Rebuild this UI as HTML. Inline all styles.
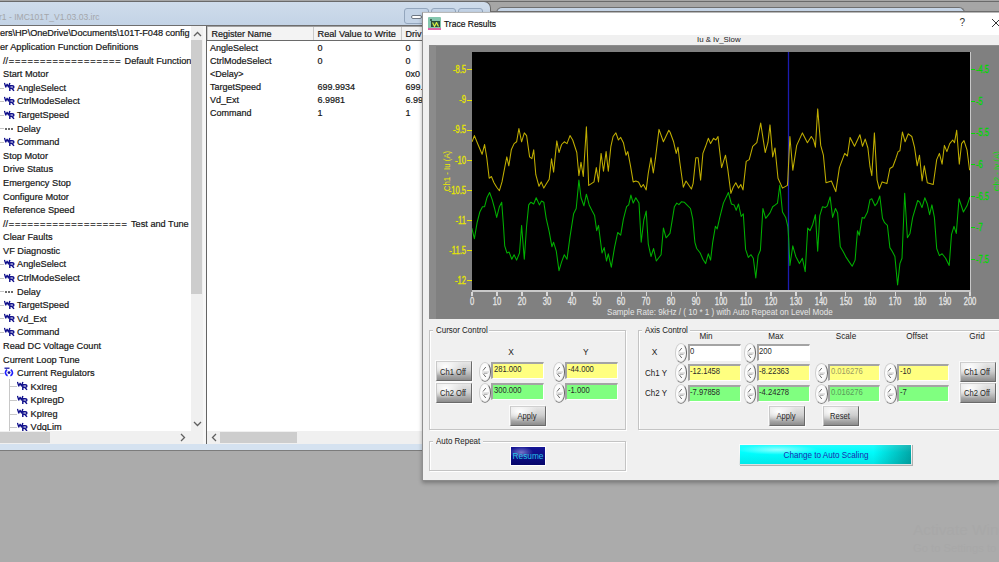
<!DOCTYPE html><html><head><meta charset="utf-8"><style>
*{margin:0;padding:0;box-sizing:border-box}
html,body{width:999px;height:562px;overflow:hidden;background:#ababab;font-family:"Liberation Sans",sans-serif}
.a{position:absolute}
.t{position:absolute;white-space:nowrap;line-height:12px;height:12px}
.tr{font-size:9.2px;color:#111;-webkit-text-stroke:0.2px #222}
.wr{position:absolute;width:11px;height:9px}
.wr b{position:absolute;font-weight:bold;color:#16169a;font-size:7px;line-height:7px;font-family:"Liberation Sans",sans-serif}
.dl{font-size:9px;color:#d6d6d6}
.dg{font-size:8.3px;color:#1a1a1a}
.fld{position:absolute;height:17px;border-top:2px solid #9c9c9c;border-left:2px solid #9c9c9c;border-bottom:1px solid #fff;border-right:1px solid #fff;font-size:8.6px;color:#2a2a2a;padding-left:0px;line-height:11px;white-space:nowrap;overflow:hidden}
.spin{position:absolute;width:12px;height:19px;border-radius:6px/9px;background:radial-gradient(ellipse at 40% 45%,#ffffff 0%,#f2f2f2 50%,#c4c4c4 100%);border:1px solid #c8c8c8}
.btn{position:absolute;height:20px;background:linear-gradient(#f4f4f4,#d2d2d2 45%,#8a8a8a);border:1px solid #7a7a7a;border-top-color:#e0e0e0;border-left-color:#d8d8d8;font-size:8.5px;color:#1a1a1a;text-align:center;line-height:19px;white-space:nowrap}
.grp{position:absolute;border:1px solid #c4c4c4;box-shadow:inset 1px 1px 0 #fff,1px 1px 0 #fff}
.gl{position:absolute;background:#f0f0f0;padding:0 2px;font-size:8.3px;color:#1a1a1a;line-height:10px;white-space:nowrap}
</style></head><body>
<div class="a" style="left:0;top:0;width:999px;height:12px;background:#a6a6a6"></div>
<div class="a" style="left:0;top:1px;width:999px;height:1px;background:#6a6a6a"></div>
<div class="a" style="left:0;top:1px;width:491px;height:25px;background:linear-gradient(#cfdceb,#c3d3e6);border-top:1px solid #6a6a6a;border-right:1px solid #6a6a6a;border-radius:0 7px 0 0"></div>
<div class="a" style="left:496px;top:7px;width:469px;height:10px;background:#c6d5e7;border-top:1px solid #6f6f6f;border-left:1px solid #6f6f6f;border-right:1px solid #6f6f6f;border-radius:6px 6px 0 0"></div>
<div class="t" style="left:-1px;top:10.5px;font-size:9.6px;color:#a4a6aa;transform-origin:0 0;transform:scaleX(0.89)">r1 - IMC101T_V1.03.03.irc</div>
<div class="a" style="left:404px;top:8px;width:25px;height:16px;border:1px solid #93a6bd;border-radius:3px;background:#c4d4e7"></div>
<div class="a" style="left:431px;top:8px;width:25px;height:16px;border:1px solid #93a6bd;border-radius:3px;background:#c4d4e7"></div>
<div class="a" style="left:458px;top:8px;width:25px;height:16px;border:1px solid #93a6bd;border-radius:3px;background:#c4d4e7"></div>
<div class="a" style="left:411px;top:15px;width:11px;height:3.5px;border:1px solid #6d7784;background:#fff;border-radius:2px"></div>
<div class="a" style="left:490px;top:11px;width:509px;height:1px;background:#707070"></div>
<div class="a" style="left:0;top:25px;width:423px;height:1px;background:#6e6e6e"></div>
<div class="a" style="left:0;top:26px;width:191px;height:405px;background:#fff"></div>
<div class="a" style="left:191px;top:26px;width:12px;height:405px;background:#f0f0f0"></div>
<div class="a" style="left:191px;top:40px;width:11px;height:254px;background:#cdcdcd"></div>
<svg class="a" style="left:192.5px;top:421px" width="9" height="6"><polyline points="1,1 4.5,4.5 8,1" fill="none" stroke="#606060" stroke-width="1.3"/></svg>
<svg class="a" style="left:193px;top:31px" width="9" height="6"><polyline points="1,5 4.5,1.5 8,5" fill="none" stroke="#606060" stroke-width="1.3"/></svg>
<div class="a" style="left:0;top:431px;width:204px;height:13px;background:#f0f0f0"></div>
<div class="a" style="left:0;top:432px;width:50px;height:11px;background:#cdcdcd"></div>
<svg class="a" style="left:180px;top:433px" width="6" height="9"><polyline points="1,1 4.5,4.5 1,8" fill="none" stroke="#606060" stroke-width="1.3"/></svg>
<div class="a" style="left:203px;top:26px;width:3px;height:418px;background:#f7f7f7"></div>
<div class="a" style="left:206px;top:26px;width:1px;height:418px;background:#646464"></div>
<div class="a" style="left:207px;top:26px;width:216px;height:405px;background:#fff"></div>
<div class="a" style="left:207px;top:26px;width:216px;height:15px;background:#f3f3f3;border-top:1px solid #a0a0a0;border-bottom:1px solid #6a6a6a"></div>
<div class="a" style="left:313px;top:27px;width:1px;height:13px;background:#c9c9c9"></div>
<div class="a" style="left:401px;top:27px;width:1px;height:13px;background:#c9c9c9"></div>
<div class="a" style="left:207px;top:27px;width:1px;height:13px;background:#c9c9c9"></div>
<div class="a" style="left:207px;top:431px;width:216px;height:13px;background:#f0f0f0"></div>
<div class="a" style="left:220px;top:432px;width:77px;height:11px;background:#cdcdcd"></div>
<svg class="a" style="left:211px;top:433px" width="6" height="9"><polyline points="5,1 1.5,4.5 5,8" fill="none" stroke="#606060" stroke-width="1.3"/></svg>
<div class="a" style="left:0;top:444px;width:423px;height:7px;background:#d5e2f0;border-bottom:1px solid #7c7c7c"></div>
<div class="t tr" style="left:211.5px;top:28.0px;font-size:9.0px">Register Name</div>
<div class="t tr" style="left:317.5px;top:28.0px;font-size:9.2px">Real Value to Write</div>
<div class="t tr" style="left:405.5px;top:28.0px;font-size:9.0px">Driv</div>
<div class="t tr" style="left:210px;top:41.5px;font-size:9.0px">AngleSelect</div>
<div class="t tr" style="left:317.5px;top:41.5px;font-size:9.0px">0</div>
<div class="t tr" style="left:405.5px;top:41.5px;font-size:9.0px">0</div>
<div class="t tr" style="left:210px;top:54.5px;font-size:9.0px">CtrlModeSelect</div>
<div class="t tr" style="left:317.5px;top:54.5px;font-size:9.0px">0</div>
<div class="t tr" style="left:405.5px;top:54.5px;font-size:9.0px">0</div>
<div class="t tr" style="left:210px;top:67.5px;font-size:9.0px">&lt;Delay&gt;</div>
<div class="t tr" style="left:317.5px;top:67.5px;font-size:9.0px"></div>
<div class="t tr" style="left:405.5px;top:67.5px;font-size:9.0px">0x0</div>
<div class="t tr" style="left:210px;top:80.5px;font-size:9.0px">TargetSpeed</div>
<div class="t tr" style="left:317.5px;top:80.5px;font-size:9.0px">699.9934</div>
<div class="t tr" style="left:405.5px;top:80.5px;font-size:9.0px">699.</div>
<div class="t tr" style="left:210px;top:93.5px;font-size:9.0px">Vd_Ext</div>
<div class="t tr" style="left:317.5px;top:93.5px;font-size:9.0px">6.9981</div>
<div class="t tr" style="left:405.5px;top:93.5px;font-size:9.0px">6.99</div>
<div class="t tr" style="left:210px;top:106.5px;font-size:9.0px">Command</div>
<div class="t tr" style="left:317.5px;top:106.5px;font-size:9.0px">1</div>
<div class="t tr" style="left:405.5px;top:106.5px;font-size:9.0px">1</div>
<div class="a" style="left:0;top:26px;width:191px;height:405px;overflow:hidden"><div class="a" style="left:0;top:-26px;width:191px;height:460px">
<div class="a" style="left:9px;top:379px;width:1px;height:52px;background:#c8c8c8"></div>
<div class="t tr" style="left:0px;top:27.4px;"><span style="letter-spacing:-0.07px">ers\HP\OneDrive\Documents\101T-F048 config</span></div>
<div class="t tr" style="left:0px;top:41.0px;">er Application Function Definitions</div>
<div class="t tr" style="left:3px;top:54.6px;">//<span style="letter-spacing:0.9px;margin-left:0.6px">==================</span></div>
<div class="t tr" style="left:124.5px;top:54.6px;">Default Function</div>
<div class="t tr" style="left:3px;top:68.2px;">Start Motor</div>
<div class="a" style="left:0;top:87.5px;width:4px;height:1px;background:#c4c4c4"></div>
<svg class="a" style="left:3.5px;top:82.3px" width="12" height="10"><polyline points="0.4,0.9 1.8,5 3.1,2.3 4.4,5 5.9,0.9" fill="none" stroke="#10108c" stroke-width="1.35" stroke-linejoin="round"/><path d="M5.8,8.9 V3.7 H8.3 Q9.9,3.7 9.9,4.95 Q9.9,6.2 8.3,6.2 H5.8 M7.7,6.2 L10,8.9" fill="none" stroke="#10108c" stroke-width="1.45"/></svg>
<div class="t tr" style="left:17px;top:81.8px;">AngleSelect</div>
<div class="a" style="left:0;top:101.1px;width:4px;height:1px;background:#c4c4c4"></div>
<svg class="a" style="left:3.5px;top:95.9px" width="12" height="10"><polyline points="0.4,0.9 1.8,5 3.1,2.3 4.4,5 5.9,0.9" fill="none" stroke="#10108c" stroke-width="1.35" stroke-linejoin="round"/><path d="M5.8,8.9 V3.7 H8.3 Q9.9,3.7 9.9,4.95 Q9.9,6.2 8.3,6.2 H5.8 M7.7,6.2 L10,8.9" fill="none" stroke="#10108c" stroke-width="1.45"/></svg>
<div class="t tr" style="left:17px;top:95.4px;">CtrlModeSelect</div>
<div class="a" style="left:0;top:114.7px;width:4px;height:1px;background:#c4c4c4"></div>
<svg class="a" style="left:3.5px;top:109.5px" width="12" height="10"><polyline points="0.4,0.9 1.8,5 3.1,2.3 4.4,5 5.9,0.9" fill="none" stroke="#10108c" stroke-width="1.35" stroke-linejoin="round"/><path d="M5.8,8.9 V3.7 H8.3 Q9.9,3.7 9.9,4.95 Q9.9,6.2 8.3,6.2 H5.8 M7.7,6.2 L10,8.9" fill="none" stroke="#10108c" stroke-width="1.45"/></svg>
<div class="t tr" style="left:17px;top:109.0px;">TargetSpeed</div>
<div class="a" style="left:0;top:128.2px;width:4px;height:1px;background:#c4c4c4"></div>
<div class="a" style="left:4.5px;top:127.9px;width:2px;height:2px;border-radius:50%;background:#3a3a3a"></div>
<div class="a" style="left:7.6px;top:127.9px;width:2px;height:2px;border-radius:50%;background:#3a3a3a"></div>
<div class="a" style="left:10.8px;top:127.9px;width:2px;height:2px;border-radius:50%;background:#3a3a3a"></div>
<div class="t tr" style="left:17px;top:122.5px;">Delay</div>
<div class="a" style="left:0;top:141.8px;width:4px;height:1px;background:#c4c4c4"></div>
<svg class="a" style="left:3.5px;top:136.6px" width="12" height="10"><polyline points="0.4,0.9 1.8,5 3.1,2.3 4.4,5 5.9,0.9" fill="none" stroke="#10108c" stroke-width="1.35" stroke-linejoin="round"/><path d="M5.8,8.9 V3.7 H8.3 Q9.9,3.7 9.9,4.95 Q9.9,6.2 8.3,6.2 H5.8 M7.7,6.2 L10,8.9" fill="none" stroke="#10108c" stroke-width="1.45"/></svg>
<div class="t tr" style="left:17px;top:136.1px;">Command</div>
<div class="t tr" style="left:3px;top:149.7px;">Stop Motor</div>
<div class="t tr" style="left:3px;top:163.3px;">Drive Status</div>
<div class="t tr" style="left:3px;top:176.9px;">Emergency Stop</div>
<div class="t tr" style="left:3px;top:190.5px;">Configure Motor</div>
<div class="t tr" style="left:3px;top:204.1px;">Reference Speed</div>
<div class="t tr" style="left:3px;top:217.6px;">//<span style="letter-spacing:0.9px;margin-left:0.6px">===================</span></div>
<div class="t tr" style="left:131px;top:217.6px;">Test and Tune</div>
<div class="t tr" style="left:3px;top:231.2px;">Clear Faults</div>
<div class="t tr" style="left:3px;top:244.8px;">VF Diagnostic</div>
<div class="a" style="left:0;top:264.1px;width:4px;height:1px;background:#c4c4c4"></div>
<svg class="a" style="left:3.5px;top:258.9px" width="12" height="10"><polyline points="0.4,0.9 1.8,5 3.1,2.3 4.4,5 5.9,0.9" fill="none" stroke="#10108c" stroke-width="1.35" stroke-linejoin="round"/><path d="M5.8,8.9 V3.7 H8.3 Q9.9,3.7 9.9,4.95 Q9.9,6.2 8.3,6.2 H5.8 M7.7,6.2 L10,8.9" fill="none" stroke="#10108c" stroke-width="1.45"/></svg>
<div class="t tr" style="left:17px;top:258.4px;">AngleSelect</div>
<div class="a" style="left:0;top:277.7px;width:4px;height:1px;background:#c4c4c4"></div>
<svg class="a" style="left:3.5px;top:272.5px" width="12" height="10"><polyline points="0.4,0.9 1.8,5 3.1,2.3 4.4,5 5.9,0.9" fill="none" stroke="#10108c" stroke-width="1.35" stroke-linejoin="round"/><path d="M5.8,8.9 V3.7 H8.3 Q9.9,3.7 9.9,4.95 Q9.9,6.2 8.3,6.2 H5.8 M7.7,6.2 L10,8.9" fill="none" stroke="#10108c" stroke-width="1.45"/></svg>
<div class="t tr" style="left:17px;top:272.0px;">CtrlModeSelect</div>
<div class="a" style="left:0;top:291.3px;width:4px;height:1px;background:#c4c4c4"></div>
<div class="a" style="left:4.5px;top:291.0px;width:2px;height:2px;border-radius:50%;background:#3a3a3a"></div>
<div class="a" style="left:7.6px;top:291.0px;width:2px;height:2px;border-radius:50%;background:#3a3a3a"></div>
<div class="a" style="left:10.8px;top:291.0px;width:2px;height:2px;border-radius:50%;background:#3a3a3a"></div>
<div class="t tr" style="left:17px;top:285.6px;">Delay</div>
<div class="a" style="left:0;top:304.9px;width:4px;height:1px;background:#c4c4c4"></div>
<svg class="a" style="left:3.5px;top:299.7px" width="12" height="10"><polyline points="0.4,0.9 1.8,5 3.1,2.3 4.4,5 5.9,0.9" fill="none" stroke="#10108c" stroke-width="1.35" stroke-linejoin="round"/><path d="M5.8,8.9 V3.7 H8.3 Q9.9,3.7 9.9,4.95 Q9.9,6.2 8.3,6.2 H5.8 M7.7,6.2 L10,8.9" fill="none" stroke="#10108c" stroke-width="1.45"/></svg>
<div class="t tr" style="left:17px;top:299.2px;">TargetSpeed</div>
<div class="a" style="left:0;top:318.4px;width:4px;height:1px;background:#c4c4c4"></div>
<svg class="a" style="left:3.5px;top:313.2px" width="12" height="10"><polyline points="0.4,0.9 1.8,5 3.1,2.3 4.4,5 5.9,0.9" fill="none" stroke="#10108c" stroke-width="1.35" stroke-linejoin="round"/><path d="M5.8,8.9 V3.7 H8.3 Q9.9,3.7 9.9,4.95 Q9.9,6.2 8.3,6.2 H5.8 M7.7,6.2 L10,8.9" fill="none" stroke="#10108c" stroke-width="1.45"/></svg>
<div class="t tr" style="left:17px;top:312.7px;">Vd_Ext</div>
<div class="a" style="left:0;top:332.0px;width:4px;height:1px;background:#c4c4c4"></div>
<svg class="a" style="left:3.5px;top:326.8px" width="12" height="10"><polyline points="0.4,0.9 1.8,5 3.1,2.3 4.4,5 5.9,0.9" fill="none" stroke="#10108c" stroke-width="1.35" stroke-linejoin="round"/><path d="M5.8,8.9 V3.7 H8.3 Q9.9,3.7 9.9,4.95 Q9.9,6.2 8.3,6.2 H5.8 M7.7,6.2 L10,8.9" fill="none" stroke="#10108c" stroke-width="1.45"/></svg>
<div class="t tr" style="left:17px;top:326.3px;">Command</div>
<div class="t tr" style="left:3px;top:339.9px;">Read DC Voltage Count</div>
<div class="t tr" style="left:3px;top:353.5px;">Current Loop Tune</div>
<div class="a" style="left:0;top:372.8px;width:4px;height:1px;background:#c4c4c4"></div>
<svg class="a" style="left:4px;top:367.2px" width="10" height="10"><path d="M3,2.6 Q0.9,4.6 1.6,6.6 Q2.2,8.2 3.6,8.8 M6.8,2.6 Q8.9,4.4 8.4,6.6 Q7.9,8.2 6.4,8.8" fill="none" stroke="#1e1eff" stroke-width="1.6"/><circle cx="5" cy="5.6" r="1.4" fill="#10108c"/><line x1="0.5" y1="1.2" x2="5.5" y2="1.2" stroke="#1a1aa0" stroke-width="1.3"/></svg>
<div class="t tr" style="left:17px;top:367.1px;">Current Regulators</div>
<div class="a" style="left:9px;top:386.4px;width:8px;height:1px;background:#c8c8c8"></div>
<svg class="a" style="left:17.0px;top:381.2px" width="12" height="10"><polyline points="0.4,0.9 1.8,5 3.1,2.3 4.4,5 5.9,0.9" fill="none" stroke="#10108c" stroke-width="1.35" stroke-linejoin="round"/><path d="M5.8,8.9 V3.7 H8.3 Q9.9,3.7 9.9,4.95 Q9.9,6.2 8.3,6.2 H5.8 M7.7,6.2 L10,8.9" fill="none" stroke="#10108c" stroke-width="1.45"/></svg>
<div class="t tr" style="left:30.5px;top:380.7px;">KxIreg</div>
<div class="a" style="left:9px;top:400.0px;width:8px;height:1px;background:#c8c8c8"></div>
<svg class="a" style="left:17.0px;top:394.8px" width="12" height="10"><polyline points="0.4,0.9 1.8,5 3.1,2.3 4.4,5 5.9,0.9" fill="none" stroke="#10108c" stroke-width="1.35" stroke-linejoin="round"/><path d="M5.8,8.9 V3.7 H8.3 Q9.9,3.7 9.9,4.95 Q9.9,6.2 8.3,6.2 H5.8 M7.7,6.2 L10,8.9" fill="none" stroke="#10108c" stroke-width="1.45"/></svg>
<div class="t tr" style="left:30.5px;top:394.3px;">KpIregD</div>
<div class="a" style="left:9px;top:413.6px;width:8px;height:1px;background:#c8c8c8"></div>
<svg class="a" style="left:17.0px;top:408.4px" width="12" height="10"><polyline points="0.4,0.9 1.8,5 3.1,2.3 4.4,5 5.9,0.9" fill="none" stroke="#10108c" stroke-width="1.35" stroke-linejoin="round"/><path d="M5.8,8.9 V3.7 H8.3 Q9.9,3.7 9.9,4.95 Q9.9,6.2 8.3,6.2 H5.8 M7.7,6.2 L10,8.9" fill="none" stroke="#10108c" stroke-width="1.45"/></svg>
<div class="t tr" style="left:30.5px;top:407.9px;">KpIreg</div>
<div class="a" style="left:9px;top:427.1px;width:8px;height:1px;background:#c8c8c8"></div>
<svg class="a" style="left:17.0px;top:421.9px" width="12" height="10"><polyline points="0.4,0.9 1.8,5 3.1,2.3 4.4,5 5.9,0.9" fill="none" stroke="#10108c" stroke-width="1.35" stroke-linejoin="round"/><path d="M5.8,8.9 V3.7 H8.3 Q9.9,3.7 9.9,4.95 Q9.9,6.2 8.3,6.2 H5.8 M7.7,6.2 L10,8.9" fill="none" stroke="#10108c" stroke-width="1.45"/></svg>
<div class="t tr" style="left:30.5px;top:421.4px;">VdqLim</div>
</div></div>
<div class="a" style="left:422px;top:12px;width:577px;height:469px;background:#f0f0f0;border-left:1px solid #8f8f8f;border-top:1px solid #b8b8b8;border-bottom:1px solid #8a8a8a;box-shadow:0 2px 4px rgba(0,0,0,.3)"></div>
<div class="a" style="left:423px;top:13px;width:576px;height:22px;background:#fff"></div>
<div class="a" style="left:428px;top:17px;width:13px;height:13px;background:#84c6ad;border-radius:1px"></div>
<div class="a" style="left:428px;top:27.5px;width:13px;height:2.5px;background:#dc64a8"></div>
<div class="a" style="left:430.5px;top:20.5px;width:9.5px;height:6.5px;background:#2f5f4a;border:1px solid #284838"></div>
<svg class="a" style="left:431.5px;top:21.5px" width="8" height="5"><polyline points="0.5,0.5 2.5,4.5 4.5,0.5 6.5,4.5" fill="none" stroke="#d8e840" stroke-width="1.2"/></svg>
<div class="a" style="left:429.5px;top:18.5px;width:2px;height:2px;background:#2a4a3a;border-radius:50%"></div>
<div class="t" style="left:444px;top:17.5px;font-size:9.6px;color:#111;-webkit-text-stroke:0.2px #111;transform-origin:0 0;transform:scaleX(0.885)">Trace Results</div>
<div class="t" style="left:959.5px;top:17px;font-size:10px;color:#303030">?</div>
<svg class="a" style="left:991px;top:18px" width="9" height="10"><line x1="1" y1="1" x2="9" y2="9" stroke="#333" stroke-width="1"/><line x1="9" y1="1" x2="1" y2="9" stroke="#333" stroke-width="1"/></svg>
<div class="t" style="left:697px;transform-origin:0 50%;top:34.13px;font-size:8.0px;color:#202020;transform:scaleX(0.98);">Iu &amp; Iv_Slow</div>
<div class="a" style="left:429px;top:45px;width:570px;height:274px;background:#808080;border-top:1px solid #8e8e8e"></div>
<div class="a" style="left:429px;top:45px;width:7px;height:274px;background:#8b8b8b"></div>
<div class="a" style="left:472px;top:52px;width:498px;height:238px;background:#000"></div>
<div class="a" style="left:970px;top:52px;width:1px;height:239px;background:#c8c8c8"></div>
<div class="a" style="left:472px;top:290px;width:499px;height:1.5px;background:#c8c8c8"></div>
<div class="a" style="left:471.4px;top:291.5px;width:1.6px;height:4px;background:#d8d8d8"></div>
<div class="t" style="left:412.0px;width:120px;text-align:center;transform-origin:50% 50%;top:295.84px;font-size:10px;color:#ececec;transform:scaleX(0.76);-webkit-text-stroke:0.3px #e0e0e0">0</div>
<div class="a" style="left:496.3px;top:291.5px;width:1.6px;height:4px;background:#d8d8d8"></div>
<div class="t" style="left:436.9px;width:120px;text-align:center;transform-origin:50% 50%;top:295.84px;font-size:10px;color:#ececec;transform:scaleX(0.76);-webkit-text-stroke:0.3px #e0e0e0">10</div>
<div class="a" style="left:521.2px;top:291.5px;width:1.6px;height:4px;background:#d8d8d8"></div>
<div class="t" style="left:461.79999999999995px;width:120px;text-align:center;transform-origin:50% 50%;top:295.84px;font-size:10px;color:#ececec;transform:scaleX(0.76);-webkit-text-stroke:0.3px #e0e0e0">20</div>
<div class="a" style="left:546.1px;top:291.5px;width:1.6px;height:4px;background:#d8d8d8"></div>
<div class="t" style="left:486.70000000000005px;width:120px;text-align:center;transform-origin:50% 50%;top:295.84px;font-size:10px;color:#ececec;transform:scaleX(0.76);-webkit-text-stroke:0.3px #e0e0e0">30</div>
<div class="a" style="left:571.0px;top:291.5px;width:1.6px;height:4px;background:#d8d8d8"></div>
<div class="t" style="left:511.6px;width:120px;text-align:center;transform-origin:50% 50%;top:295.84px;font-size:10px;color:#ececec;transform:scaleX(0.76);-webkit-text-stroke:0.3px #e0e0e0">40</div>
<div class="a" style="left:595.9px;top:291.5px;width:1.6px;height:4px;background:#d8d8d8"></div>
<div class="t" style="left:536.5px;width:120px;text-align:center;transform-origin:50% 50%;top:295.84px;font-size:10px;color:#ececec;transform:scaleX(0.76);-webkit-text-stroke:0.3px #e0e0e0">50</div>
<div class="a" style="left:620.8px;top:291.5px;width:1.6px;height:4px;background:#d8d8d8"></div>
<div class="t" style="left:561.4px;width:120px;text-align:center;transform-origin:50% 50%;top:295.84px;font-size:10px;color:#ececec;transform:scaleX(0.76);-webkit-text-stroke:0.3px #e0e0e0">60</div>
<div class="a" style="left:645.7px;top:291.5px;width:1.6px;height:4px;background:#d8d8d8"></div>
<div class="t" style="left:586.3px;width:120px;text-align:center;transform-origin:50% 50%;top:295.84px;font-size:10px;color:#ececec;transform:scaleX(0.76);-webkit-text-stroke:0.3px #e0e0e0">70</div>
<div class="a" style="left:670.6px;top:291.5px;width:1.6px;height:4px;background:#d8d8d8"></div>
<div class="t" style="left:611.2px;width:120px;text-align:center;transform-origin:50% 50%;top:295.84px;font-size:10px;color:#ececec;transform:scaleX(0.76);-webkit-text-stroke:0.3px #e0e0e0">80</div>
<div class="a" style="left:695.5px;top:291.5px;width:1.6px;height:4px;background:#d8d8d8"></div>
<div class="t" style="left:636.1px;width:120px;text-align:center;transform-origin:50% 50%;top:295.84px;font-size:10px;color:#ececec;transform:scaleX(0.76);-webkit-text-stroke:0.3px #e0e0e0">90</div>
<div class="a" style="left:720.4px;top:291.5px;width:1.6px;height:4px;background:#d8d8d8"></div>
<div class="t" style="left:661.0px;width:120px;text-align:center;transform-origin:50% 50%;top:295.84px;font-size:10px;color:#ececec;transform:scaleX(0.76);-webkit-text-stroke:0.3px #e0e0e0">100</div>
<div class="a" style="left:745.3px;top:291.5px;width:1.6px;height:4px;background:#d8d8d8"></div>
<div class="t" style="left:685.9px;width:120px;text-align:center;transform-origin:50% 50%;top:295.84px;font-size:10px;color:#ececec;transform:scaleX(0.76);-webkit-text-stroke:0.3px #e0e0e0">110</div>
<div class="a" style="left:770.2px;top:291.5px;width:1.6px;height:4px;background:#d8d8d8"></div>
<div class="t" style="left:710.8px;width:120px;text-align:center;transform-origin:50% 50%;top:295.84px;font-size:10px;color:#ececec;transform:scaleX(0.76);-webkit-text-stroke:0.3px #e0e0e0">120</div>
<div class="a" style="left:795.1px;top:291.5px;width:1.6px;height:4px;background:#d8d8d8"></div>
<div class="t" style="left:735.7px;width:120px;text-align:center;transform-origin:50% 50%;top:295.84px;font-size:10px;color:#ececec;transform:scaleX(0.76);-webkit-text-stroke:0.3px #e0e0e0">130</div>
<div class="a" style="left:820.0px;top:291.5px;width:1.6px;height:4px;background:#d8d8d8"></div>
<div class="t" style="left:760.5999999999999px;width:120px;text-align:center;transform-origin:50% 50%;top:295.84px;font-size:10px;color:#ececec;transform:scaleX(0.76);-webkit-text-stroke:0.3px #e0e0e0">140</div>
<div class="a" style="left:844.9px;top:291.5px;width:1.6px;height:4px;background:#d8d8d8"></div>
<div class="t" style="left:785.5px;width:120px;text-align:center;transform-origin:50% 50%;top:295.84px;font-size:10px;color:#ececec;transform:scaleX(0.76);-webkit-text-stroke:0.3px #e0e0e0">150</div>
<div class="a" style="left:869.8px;top:291.5px;width:1.6px;height:4px;background:#d8d8d8"></div>
<div class="t" style="left:810.4px;width:120px;text-align:center;transform-origin:50% 50%;top:295.84px;font-size:10px;color:#ececec;transform:scaleX(0.76);-webkit-text-stroke:0.3px #e0e0e0">160</div>
<div class="a" style="left:894.7px;top:291.5px;width:1.6px;height:4px;background:#d8d8d8"></div>
<div class="t" style="left:835.3px;width:120px;text-align:center;transform-origin:50% 50%;top:295.84px;font-size:10px;color:#ececec;transform:scaleX(0.76);-webkit-text-stroke:0.3px #e0e0e0">170</div>
<div class="a" style="left:919.6px;top:291.5px;width:1.6px;height:4px;background:#d8d8d8"></div>
<div class="t" style="left:860.2px;width:120px;text-align:center;transform-origin:50% 50%;top:295.84px;font-size:10px;color:#ececec;transform:scaleX(0.76);-webkit-text-stroke:0.3px #e0e0e0">180</div>
<div class="a" style="left:944.5px;top:291.5px;width:1.6px;height:4px;background:#d8d8d8"></div>
<div class="t" style="left:885.0999999999999px;width:120px;text-align:center;transform-origin:50% 50%;top:295.84px;font-size:10px;color:#ececec;transform:scaleX(0.76);-webkit-text-stroke:0.3px #e0e0e0">190</div>
<div class="a" style="left:969.4px;top:291.5px;width:1.6px;height:4px;background:#d8d8d8"></div>
<div class="t" style="left:910.0px;width:120px;text-align:center;transform-origin:50% 50%;top:295.84px;font-size:10px;color:#ececec;transform:scaleX(0.76);-webkit-text-stroke:0.3px #e0e0e0">200</div>
<div class="t" style="left:607.2px;transform-origin:0 50%;top:305.60px;font-size:9.8px;color:#e6e6e6;transform:scaleX(0.824);">Sample Rate: 9kHz / ( 10 * 1 ) with Auto Repeat on Level Mode</div>
<div class="a" style="left:467px;top:69.4px;width:5px;height:1px;background:#e8e800"></div>
<div class="t" style="left:346px;width:120px;text-align:right;transform-origin:100% 50%;top:64.13px;font-size:10px;color:#f0f000;transform:scaleX(0.76);-webkit-text-stroke:0.3px #e0e000">-8.5</div>
<div class="a" style="left:467px;top:99.6px;width:5px;height:1px;background:#e8e800"></div>
<div class="t" style="left:346px;width:120px;text-align:right;transform-origin:100% 50%;top:94.28px;font-size:10px;color:#f0f000;transform:scaleX(0.76);-webkit-text-stroke:0.3px #e0e000">-9</div>
<div class="a" style="left:467px;top:129.7px;width:5px;height:1px;background:#e8e800"></div>
<div class="t" style="left:346px;width:120px;text-align:right;transform-origin:100% 50%;top:124.44px;font-size:10px;color:#f0f000;transform:scaleX(0.76);-webkit-text-stroke:0.3px #e0e000">-9.5</div>
<div class="a" style="left:467px;top:159.8px;width:5px;height:1px;background:#e8e800"></div>
<div class="t" style="left:346px;width:120px;text-align:right;transform-origin:100% 50%;top:154.58px;font-size:10px;color:#f0f000;transform:scaleX(0.76);-webkit-text-stroke:0.3px #e0e000">-10</div>
<div class="a" style="left:467px;top:190.0px;width:5px;height:1px;background:#e8e800"></div>
<div class="t" style="left:346px;width:120px;text-align:right;transform-origin:100% 50%;top:184.73px;font-size:10px;color:#f0f000;transform:scaleX(0.76);-webkit-text-stroke:0.3px #e0e000">-10.5</div>
<div class="a" style="left:467px;top:220.2px;width:5px;height:1px;background:#e8e800"></div>
<div class="t" style="left:346px;width:120px;text-align:right;transform-origin:100% 50%;top:214.88px;font-size:10px;color:#f0f000;transform:scaleX(0.76);-webkit-text-stroke:0.3px #e0e000">-11</div>
<div class="a" style="left:467px;top:250.3px;width:5px;height:1px;background:#e8e800"></div>
<div class="t" style="left:346px;width:120px;text-align:right;transform-origin:100% 50%;top:245.03px;font-size:10px;color:#f0f000;transform:scaleX(0.76);-webkit-text-stroke:0.3px #e0e000">-11.5</div>
<div class="a" style="left:467px;top:280.4px;width:5px;height:1px;background:#e8e800"></div>
<div class="t" style="left:346px;width:120px;text-align:right;transform-origin:100% 50%;top:275.19px;font-size:10px;color:#f0f000;transform:scaleX(0.76);-webkit-text-stroke:0.3px #e0e000">-12</div>
<div class="a" style="left:971px;top:69.3px;width:4px;height:1px;background:#00e000"></div>
<div class="t" style="left:975.5px;transform-origin:0 50%;top:64.03px;font-size:10px;color:#00e000;transform:scaleX(0.76);-webkit-text-stroke:0.3px #00d000">-4.5</div>
<div class="a" style="left:971px;top:100.9px;width:4px;height:1px;background:#00e000"></div>
<div class="t" style="left:975.5px;transform-origin:0 50%;top:95.66px;font-size:10px;color:#00e000;transform:scaleX(0.76);-webkit-text-stroke:0.3px #00d000">-5</div>
<div class="a" style="left:971px;top:132.5px;width:4px;height:1px;background:#00e000"></div>
<div class="t" style="left:975.5px;transform-origin:0 50%;top:127.28px;font-size:10px;color:#00e000;transform:scaleX(0.76);-webkit-text-stroke:0.3px #00d000">-5.5</div>
<div class="a" style="left:971px;top:164.2px;width:4px;height:1px;background:#00e000"></div>
<div class="t" style="left:975.5px;transform-origin:0 50%;top:158.89px;font-size:10px;color:#00e000;transform:scaleX(0.76);-webkit-text-stroke:0.3px #00d000">-6</div>
<div class="a" style="left:971px;top:195.8px;width:4px;height:1px;background:#00e000"></div>
<div class="t" style="left:975.5px;transform-origin:0 50%;top:190.51px;font-size:10px;color:#00e000;transform:scaleX(0.76);-webkit-text-stroke:0.3px #00d000">-6.5</div>
<div class="a" style="left:971px;top:227.4px;width:4px;height:1px;background:#00e000"></div>
<div class="t" style="left:975.5px;transform-origin:0 50%;top:222.13px;font-size:10px;color:#00e000;transform:scaleX(0.76);-webkit-text-stroke:0.3px #00d000">-7</div>
<div class="a" style="left:971px;top:259.0px;width:4px;height:1px;background:#00e000"></div>
<div class="t" style="left:975.5px;transform-origin:0 50%;top:253.76px;font-size:10px;color:#00e000;transform:scaleX(0.76);-webkit-text-stroke:0.3px #00d000">-7.5</div>
<div class="t" style="left:426.8px;top:166.8px;width:40px;text-align:center;font-size:8.6px;color:#eaea00;transform:rotate(-90deg) scaleX(0.91)">Ch1 - Iu (A)</div>
<div class="t" style="left:976.5px;top:166.8px;width:40px;text-align:center;font-size:8.6px;color:#00e000;transform:rotate(-90deg) scaleX(0.91)">Ch2 - Iv (A)</div>
<svg class="a" style="left:0;top:0" width="999" height="562"><defs><clipPath id="cp"><rect x="472" y="52" width="498" height="238"/></clipPath></defs><g clip-path="url(#cp)"><line x1="788.5" y1="52" x2="788.5" y2="290" stroke="#1c1cb0" stroke-width="1.3"/><polyline points="472.1,141.8 474.4,135.6 478.0,144.5 482.1,154.3 484.6,144.5 486.9,158.7 489.2,178.3 491.4,176.5 494.0,182.7 496.7,187.2 499.4,190.7 502.0,181.9 504.7,167.6 506.8,156.9 508.8,165.8 511.3,149.8 514.1,143.6 516.6,141.8 518.9,128.5 521.6,141.8 524.3,132.9 526.6,135.6 529.6,156.9 531.9,158.7 533.7,149.8 535.8,174.7 539.0,186.3 541.2,181.9 543.8,188.1 546.5,183.6 549.2,179.2 551.5,158.7 553.6,172.1 556.8,140.9 559.0,152.5 561.6,144.5 564.3,141.8 567.0,143.6 570.0,135.6 572.7,140.0 576.8,152.5 578.9,175.6 581.0,162.3 583.3,176.5 586.4,126.7 588.7,185.4 594.0,181.9 596.3,167.6 598.5,181.9 601.1,153.4 603.5,171.2 606.1,151.6 608.3,171.2 610.9,146.3 613.1,136.5 615.9,132.9 618.4,140.0 620.7,137.4 623.4,142.7 626.0,155.2 627.8,151.6 630.5,165.8 633.2,181.9 635.8,181.0 638.5,181.9 641.2,187.2 643.3,184.5 646.2,189.9 648.3,173.0 651.0,157.8 653.3,173.0 655.4,158.7 659.0,129.4 663.4,141.8 668.8,130.2 670.0,132.0 673.6,141.8 676.2,153.4 678.0,147.2 679.8,162.3 683.3,187.2 686.0,181.0 691.4,189.0 693.1,183.6 695.8,157.8 698.1,157.8 700.6,180.1 702.9,153.4 705.6,146.3 708.3,138.3 710.6,143.6 713.6,138.3 715.9,140.0 718.0,136.5 721.6,167.6 725.5,155.2 727.8,169.4 730.9,193.4 733.2,187.2 735.8,182.7 738.5,188.1 740.8,184.5 743.0,189.9 746.2,161.4 749.2,159.6 752.7,146.3 756.8,142.7 760.7,123.1 765.2,152.5 767.9,142.7 770.0,124.9 772.7,156.9 775.0,148.0 778.0,178.3 782.5,188.1 787.4,185.4 787.8,180.1 789.9,136.5 792.8,170.3 796.7,145.4 802.4,132.9 807.4,142.7 811.3,136.5 813.6,140.0 815.4,147.2 817.7,108.9 820.7,145.4 823.4,155.2 826.0,182.7 831.4,181.0 835.8,191.6 839.4,167.6 844.7,153.4 847.4,156.0 850.1,137.4 854.5,146.3 859.9,134.7 862.5,146.3 865.2,139.1 867.9,148.0 870.0,166.7 871.8,175.6 874.4,132.9 877.1,180.1 879.3,189.0 882.1,181.9 886.9,183.6 889.9,168.5 892.8,166.7 895.8,158.7 898.1,151.6 899.9,150.7 902.4,132.0 905.1,141.8 908.3,133.8 911.8,136.5 914.5,147.2 917.2,165.8 919.5,155.2 922.1,181.0 924.3,165.8 927.3,182.7 933.2,184.5 936.7,159.6 939.4,153.4 942.1,164.1 944.4,145.4 946.9,151.6 949.7,143.6 952.7,140.0 954.5,142.7 956.7,130.2 959.3,164.1 961.6,143.6 964.0,140.6 967.0,149.8 969.6,170.3" fill="none" stroke="#c0ae00" stroke-width="1.05" stroke-linejoin="round"/><polyline points="471.8,228.0 474.4,238.7 477.1,222.7 479.8,212.0 482.5,206.7 484.6,206.7 486.9,197.8 489.6,192.5 492.2,199.6 494.6,208.5 496.7,217.4 499.4,206.7 501.7,202.2 503.5,226.3 504.7,245.8 507.0,253.0 509.1,252.1 511.8,259.2 514.1,254.7 516.6,260.1 519.5,253.0 521.6,225.4 524.3,259.2 526.6,226.3 528.7,204.9 530.9,202.2 533.7,204.0 536.2,197.8 539.4,204.9 541.5,201.0 543.8,202.2 546.2,218.3 549.2,231.6 551.9,246.7 553.6,242.3 556.3,251.2 559.0,270.7 561.6,261.9 564.3,254.7 567.0,259.2 570.0,236.9 573.6,213.8 576.2,208.5 578.9,180.0 581.0,197.8 583.9,205.8 586.4,194.2 589.2,204.9 592.2,211.1 594.6,215.6 596.7,230.7 598.5,225.4 602.0,253.0 604.2,247.6 606.5,261.0 608.3,253.8 611.3,267.2 614.5,247.6 617.7,232.5 620.7,235.2 623.4,219.1 626.6,206.7 628.7,204.9 630.9,195.1 633.2,203.1 635.8,197.8 639.0,203.1 641.2,242.3 643.8,220.0 646.2,211.1 648.3,244.1 651.0,256.5 653.6,248.5 656.3,261.0 661.1,254.7 663.4,228.0 666.1,237.8 670.0,233.4 672.1,220.9 674.4,206.7 676.8,203.1 678.9,204.6 681.6,201.7 684.2,202.2 686.9,204.9 690.5,208.5 692.8,219.1 694.9,242.3 696.7,248.5 700.2,253.0 702.9,259.2 705.6,263.6 708.3,253.8 710.6,260.1 712.7,242.3 715.4,226.3 717.2,228.9 719.8,217.4 723.4,203.1 728.4,192.5 731.4,204.0 734.1,204.9 736.2,210.2 738.5,204.0 741.2,216.5 743.3,213.8 745.6,249.4 748.3,257.4 751.0,254.7 753.3,258.3 755.8,277.9 758.1,255.6 760.4,250.3 762.9,208.5 765.7,218.3 770.0,212.9 772.7,206.7 775.3,204.9 777.5,203.1 779.8,185.3 782.5,212.0 785.7,217.4 787.8,226.3 788.7,238.7 789.9,265.4 792.8,245.8 795.8,256.5 799.4,263.6 802.4,258.3 805.2,271.6 807.7,228.0 810.0,230.7 812.7,224.5 815.4,214.7 817.7,251.2 819.8,215.6 822.5,206.7 825.2,207.6 827.3,205.8 830.1,196.9 832.6,217.4 835.5,208.5 837.6,212.9 840.3,246.7 843.0,251.2 846.2,257.4 849.2,261.9 852.2,266.3 855.1,260.1 857.5,230.7 859.3,235.2 862.2,217.4 864.3,218.3 867.5,212.0 870.0,199.6 871.8,198.7 875.0,205.8 877.1,203.1 879.8,196.0 882.5,218.3 884.6,222.7 887.4,225.4 889.9,247.6 892.2,251.2 894.9,256.5 897.6,285.0 899.9,263.6 902.0,258.3 904.7,193.3 907.4,237.8 910.0,233.4 912.7,217.4 917.7,200.5 919.8,202.2 922.0,207.6 924.8,197.8 927.3,204.0 929.6,214.7 931.9,204.9 934.4,217.4 936.7,248.5 939.4,255.6 942.1,253.8 945.6,258.3 949.2,265.4 951.5,234.3 954.0,226.3 956.3,233.4 959.0,198.7 963.4,212.0 967.0,205.8 970.0,196.9" fill="none" stroke="#00b000" stroke-width="1.05" stroke-linejoin="round"/></g></svg>
<div class="grp" style="left:429px;top:330px;width:197px;height:100px"></div>
<div class="a" style="left:433px;top:325px;width:56px;height:10px;background:#f0f0f0"></div>
<div class="t" style="left:435.5px;transform-origin:0 50%;top:324.09px;font-size:8.4px;color:#1a1a1a;transform:scaleX(0.95);">Cursor Control</div>
<div class="t" style="left:451px;width:120px;text-align:center;transform-origin:50% 50%;top:346.09px;font-size:8.4px;color:#1a1a1a;transform:scaleX(1);">X</div>
<div class="t" style="left:525.9px;width:120px;text-align:center;transform-origin:50% 50%;top:346.09px;font-size:8.4px;color:#1a1a1a;transform:scaleX(1);">Y</div>
<div class="a" style="left:436px;top:361px;width:36px;height:20px;background:radial-gradient(ellipse 18px 10px at 25% 25%,#ffffff,rgba(255,255,255,0) 100%),linear-gradient(#e6e6e6,#cfcfcf 45%,#8c8c8c);border:1px solid #6a6a6a;border-top-color:#cfcfcf;border-left-color:#c8c8c8;box-shadow:-1px -1px 0 #fbfbfb,1px 1px 0 #fbfbfb"></div>
<div class="t" style="left:393.4px;width:120px;text-align:center;transform-origin:50% 50%;top:365.68px;font-size:9.0px;color:#262626;transform:scaleX(0.84);">Ch1 Off</div>
<div class="a" style="left:436px;top:383px;width:36px;height:20px;background:radial-gradient(ellipse 18px 10px at 25% 25%,#ffffff,rgba(255,255,255,0) 100%),linear-gradient(#e6e6e6,#cfcfcf 45%,#8c8c8c);border:1px solid #6a6a6a;border-top-color:#cfcfcf;border-left-color:#c8c8c8;box-shadow:-1px -1px 0 #fbfbfb,1px 1px 0 #fbfbfb"></div>
<div class="t" style="left:393.4px;width:120px;text-align:center;transform-origin:50% 50%;top:387.28px;font-size:9.0px;color:#262626;transform:scaleX(0.84);">Ch2 Off</div>
<div class="a" style="left:478.5px;top:362px;width:12.5px;height:19.5px;border-radius:50%;background:radial-gradient(ellipse at 45% 45%,#ffffff 0%,#fafafa 55%,#dcdcdc 100%);border:1px solid #d0d0d0;border-right-color:#6a6a6a;border-bottom-color:#8a8a8a"></div>
<svg class="a" style="left:480.5px;top:365px" width="9" height="14"><polyline points="2,5.5 4.8,2" fill="none" stroke="#6a6a6a" stroke-width="1"/><line x1="1" y1="7" x2="8" y2="7" stroke="#c0c0c0" stroke-width="0.8"/><polyline points="2,8.5 4.8,12" fill="none" stroke="#6a6a6a" stroke-width="1"/><line x1="3" y1="8.3" x2="6.5" y2="8.3" stroke="#8a8a8a" stroke-width="0.8"/></svg>
<div class="a" style="left:491px;top:362px;width:53px;height:17px;background:#ffff80;border-top:2px solid #a4a4a4;border-left:2px solid #a4a4a4;border-bottom:1px solid #fff;border-right:1px solid #fff"></div>
<div class="t" style="left:493.6px;transform-origin:0 50%;top:363.38px;font-size:9.3px;color:#2a2a2a;transform:scaleX(0.82);">281.000</div>
<div class="a" style="left:478.5px;top:383px;width:12.5px;height:19.5px;border-radius:50%;background:radial-gradient(ellipse at 45% 45%,#ffffff 0%,#fafafa 55%,#dcdcdc 100%);border:1px solid #d0d0d0;border-right-color:#6a6a6a;border-bottom-color:#8a8a8a"></div>
<svg class="a" style="left:480.5px;top:386px" width="9" height="14"><polyline points="2,5.5 4.8,2" fill="none" stroke="#6a6a6a" stroke-width="1"/><line x1="1" y1="7" x2="8" y2="7" stroke="#c0c0c0" stroke-width="0.8"/><polyline points="2,8.5 4.8,12" fill="none" stroke="#6a6a6a" stroke-width="1"/><line x1="3" y1="8.3" x2="6.5" y2="8.3" stroke="#8a8a8a" stroke-width="0.8"/></svg>
<div class="a" style="left:491px;top:383px;width:53px;height:17px;background:#80ff80;border-top:2px solid #a4a4a4;border-left:2px solid #a4a4a4;border-bottom:1px solid #fff;border-right:1px solid #fff"></div>
<div class="t" style="left:493.6px;transform-origin:0 50%;top:384.38px;font-size:9.3px;color:#2a2a2a;transform:scaleX(0.82);">300.000</div>
<div class="a" style="left:552.5px;top:362px;width:12.5px;height:19.5px;border-radius:50%;background:radial-gradient(ellipse at 45% 45%,#ffffff 0%,#fafafa 55%,#dcdcdc 100%);border:1px solid #d0d0d0;border-right-color:#6a6a6a;border-bottom-color:#8a8a8a"></div>
<svg class="a" style="left:554.5px;top:365px" width="9" height="14"><polyline points="2,5.5 4.8,2" fill="none" stroke="#6a6a6a" stroke-width="1"/><line x1="1" y1="7" x2="8" y2="7" stroke="#c0c0c0" stroke-width="0.8"/><polyline points="2,8.5 4.8,12" fill="none" stroke="#6a6a6a" stroke-width="1"/><line x1="3" y1="8.3" x2="6.5" y2="8.3" stroke="#8a8a8a" stroke-width="0.8"/></svg>
<div class="a" style="left:565px;top:362px;width:53px;height:17px;background:#ffff80;border-top:2px solid #a4a4a4;border-left:2px solid #a4a4a4;border-bottom:1px solid #fff;border-right:1px solid #fff"></div>
<div class="t" style="left:567.6px;transform-origin:0 50%;top:363.38px;font-size:9.3px;color:#2a2a2a;transform:scaleX(0.82);">-44.000</div>
<div class="a" style="left:552.5px;top:383px;width:12.5px;height:19.5px;border-radius:50%;background:radial-gradient(ellipse at 45% 45%,#ffffff 0%,#fafafa 55%,#dcdcdc 100%);border:1px solid #d0d0d0;border-right-color:#6a6a6a;border-bottom-color:#8a8a8a"></div>
<svg class="a" style="left:554.5px;top:386px" width="9" height="14"><polyline points="2,5.5 4.8,2" fill="none" stroke="#6a6a6a" stroke-width="1"/><line x1="1" y1="7" x2="8" y2="7" stroke="#c0c0c0" stroke-width="0.8"/><polyline points="2,8.5 4.8,12" fill="none" stroke="#6a6a6a" stroke-width="1"/><line x1="3" y1="8.3" x2="6.5" y2="8.3" stroke="#8a8a8a" stroke-width="0.8"/></svg>
<div class="a" style="left:565px;top:383px;width:53px;height:17px;background:#80ff80;border-top:2px solid #a4a4a4;border-left:2px solid #a4a4a4;border-bottom:1px solid #fff;border-right:1px solid #fff"></div>
<div class="t" style="left:567.6px;transform-origin:0 50%;top:384.38px;font-size:9.3px;color:#2a2a2a;transform:scaleX(0.82);">-1.000</div>
<div class="a" style="left:510px;top:406px;width:36px;height:20px;background:radial-gradient(ellipse 18px 10px at 25% 25%,#ffffff,rgba(255,255,255,0) 100%),linear-gradient(#e6e6e6,#cfcfcf 45%,#8c8c8c);border:1px solid #6a6a6a;border-top-color:#cfcfcf;border-left-color:#c8c8c8;box-shadow:-1px -1px 0 #fbfbfb,1px 1px 0 #fbfbfb"></div>
<div class="t" style="left:467.4px;width:120px;text-align:center;transform-origin:50% 50%;top:410.38px;font-size:9.0px;color:#262626;transform:scaleX(0.84);">Apply</div>
<div class="grp" style="left:429px;top:441px;width:197px;height:30px"></div>
<div class="a" style="left:433px;top:436px;width:50px;height:10px;background:#f0f0f0"></div>
<div class="t" style="left:435.5px;transform-origin:0 50%;top:435.09px;font-size:8.4px;color:#1a1a1a;transform:scaleX(0.95);">Auto Repeat</div>
<div class="a" style="left:510px;top:446px;width:36px;height:20px;background:radial-gradient(ellipse 12px 6px at 30% 30%,rgba(200,200,255,0.55),rgba(0,0,0,0)),linear-gradient(#141494,#0c0c80 60%,#06066a);border:1px solid #ffffff"></div>
<div class="t" style="left:468px;width:120px;text-align:center;transform-origin:50% 50%;top:449.81px;font-size:9.2px;color:#26c4e8;transform:scaleX(0.9);">Resume</div>
<div class="grp" style="left:638px;top:330px;width:370px;height:100px"></div>
<div class="a" style="left:642px;top:325px;width:48px;height:10px;background:#f0f0f0"></div>
<div class="t" style="left:644.5px;transform-origin:0 50%;top:324.09px;font-size:8.4px;color:#1a1a1a;transform:scaleX(0.95);">Axis Control</div>
<div class="t" style="left:645.5px;width:120px;text-align:center;transform-origin:50% 50%;top:330.29px;font-size:8.4px;color:#1a1a1a;transform:scaleX(0.97);">Min</div>
<div class="t" style="left:715.5px;width:120px;text-align:center;transform-origin:50% 50%;top:330.29px;font-size:8.4px;color:#1a1a1a;transform:scaleX(0.97);">Max</div>
<div class="t" style="left:785.5px;width:120px;text-align:center;transform-origin:50% 50%;top:330.29px;font-size:8.4px;color:#1a1a1a;transform:scaleX(0.97);">Scale</div>
<div class="t" style="left:857px;width:120px;text-align:center;transform-origin:50% 50%;top:330.29px;font-size:8.4px;color:#1a1a1a;transform:scaleX(0.97);">Offset</div>
<div class="t" style="left:917px;width:120px;text-align:center;transform-origin:50% 50%;top:330.29px;font-size:8.4px;color:#1a1a1a;transform:scaleX(0.97);">Grid</div>
<div class="t" style="left:594.5px;width:120px;text-align:center;transform-origin:50% 50%;top:346.29px;font-size:8.4px;color:#1a1a1a;transform:scaleX(1);">X</div>
<div class="t" style="left:644.5px;transform-origin:0 50%;top:366.59px;font-size:8.4px;color:#1a1a1a;transform:scaleX(0.95);">Ch1 Y</div>
<div class="t" style="left:644.5px;transform-origin:0 50%;top:387.49px;font-size:8.4px;color:#1a1a1a;transform:scaleX(0.95);">Ch2 Y</div>
<div class="a" style="left:674.5px;top:343px;width:12.5px;height:19.5px;border-radius:50%;background:radial-gradient(ellipse at 45% 45%,#ffffff 0%,#fafafa 55%,#dcdcdc 100%);border:1px solid #d0d0d0;border-right-color:#6a6a6a;border-bottom-color:#8a8a8a"></div>
<svg class="a" style="left:676.5px;top:346px" width="9" height="14"><polyline points="2,5.5 4.8,2" fill="none" stroke="#6a6a6a" stroke-width="1"/><line x1="1" y1="7" x2="8" y2="7" stroke="#c0c0c0" stroke-width="0.8"/><polyline points="2,8.5 4.8,12" fill="none" stroke="#6a6a6a" stroke-width="1"/><line x1="3" y1="8.3" x2="6.5" y2="8.3" stroke="#8a8a8a" stroke-width="0.8"/></svg>
<div class="a" style="left:687.5px;top:344px;width:53px;height:17px;background:#ffffff;border-top:2px solid #a4a4a4;border-left:2px solid #a4a4a4;border-bottom:1px solid #fff;border-right:1px solid #fff"></div>
<div class="t" style="left:690.1px;transform-origin:0 50%;top:345.38px;font-size:9.3px;color:#2a2a2a;transform:scaleX(0.82);">0</div>
<div class="a" style="left:743.5px;top:343px;width:12.5px;height:19.5px;border-radius:50%;background:radial-gradient(ellipse at 45% 45%,#ffffff 0%,#fafafa 55%,#dcdcdc 100%);border:1px solid #d0d0d0;border-right-color:#6a6a6a;border-bottom-color:#8a8a8a"></div>
<svg class="a" style="left:745.5px;top:346px" width="9" height="14"><polyline points="2,5.5 4.8,2" fill="none" stroke="#6a6a6a" stroke-width="1"/><line x1="1" y1="7" x2="8" y2="7" stroke="#c0c0c0" stroke-width="0.8"/><polyline points="2,8.5 4.8,12" fill="none" stroke="#6a6a6a" stroke-width="1"/><line x1="3" y1="8.3" x2="6.5" y2="8.3" stroke="#8a8a8a" stroke-width="0.8"/></svg>
<div class="a" style="left:756.5px;top:344px;width:53px;height:17px;background:#ffffff;border-top:2px solid #a4a4a4;border-left:2px solid #a4a4a4;border-bottom:1px solid #fff;border-right:1px solid #fff"></div>
<div class="t" style="left:759.1px;transform-origin:0 50%;top:345.38px;font-size:9.3px;color:#2a2a2a;transform:scaleX(0.82);">200</div>
<div class="a" style="left:674.5px;top:363px;width:12.5px;height:19.5px;border-radius:50%;background:radial-gradient(ellipse at 45% 45%,#ffffff 0%,#fafafa 55%,#dcdcdc 100%);border:1px solid #d0d0d0;border-right-color:#6a6a6a;border-bottom-color:#8a8a8a"></div>
<svg class="a" style="left:676.5px;top:366px" width="9" height="14"><polyline points="2,5.5 4.8,2" fill="none" stroke="#6a6a6a" stroke-width="1"/><line x1="1" y1="7" x2="8" y2="7" stroke="#c0c0c0" stroke-width="0.8"/><polyline points="2,8.5 4.8,12" fill="none" stroke="#6a6a6a" stroke-width="1"/><line x1="3" y1="8.3" x2="6.5" y2="8.3" stroke="#8a8a8a" stroke-width="0.8"/></svg>
<div class="a" style="left:687.5px;top:364px;width:53px;height:17px;background:#ffff80;border-top:2px solid #a4a4a4;border-left:2px solid #a4a4a4;border-bottom:1px solid #fff;border-right:1px solid #fff"></div>
<div class="t" style="left:690.1px;transform-origin:0 50%;top:365.38px;font-size:9.3px;color:#2a2a2a;transform:scaleX(0.82);">-12.1458</div>
<div class="a" style="left:743.5px;top:363px;width:12.5px;height:19.5px;border-radius:50%;background:radial-gradient(ellipse at 45% 45%,#ffffff 0%,#fafafa 55%,#dcdcdc 100%);border:1px solid #d0d0d0;border-right-color:#6a6a6a;border-bottom-color:#8a8a8a"></div>
<svg class="a" style="left:745.5px;top:366px" width="9" height="14"><polyline points="2,5.5 4.8,2" fill="none" stroke="#6a6a6a" stroke-width="1"/><line x1="1" y1="7" x2="8" y2="7" stroke="#c0c0c0" stroke-width="0.8"/><polyline points="2,8.5 4.8,12" fill="none" stroke="#6a6a6a" stroke-width="1"/><line x1="3" y1="8.3" x2="6.5" y2="8.3" stroke="#8a8a8a" stroke-width="0.8"/></svg>
<div class="a" style="left:756.5px;top:364px;width:53px;height:17px;background:#ffff80;border-top:2px solid #a4a4a4;border-left:2px solid #a4a4a4;border-bottom:1px solid #fff;border-right:1px solid #fff"></div>
<div class="t" style="left:759.1px;transform-origin:0 50%;top:365.38px;font-size:9.3px;color:#2a2a2a;transform:scaleX(0.82);">-8.22363</div>
<div class="a" style="left:815px;top:363px;width:12.5px;height:19.5px;border-radius:50%;background:radial-gradient(ellipse at 45% 45%,#ffffff 0%,#fafafa 55%,#dcdcdc 100%);border:1px solid #d0d0d0;border-right-color:#6a6a6a;border-bottom-color:#8a8a8a"></div>
<svg class="a" style="left:817px;top:366px" width="9" height="14"><polyline points="2,5.5 4.8,2" fill="none" stroke="#6a6a6a" stroke-width="1"/><line x1="1" y1="7" x2="8" y2="7" stroke="#c0c0c0" stroke-width="0.8"/><polyline points="2,8.5 4.8,12" fill="none" stroke="#6a6a6a" stroke-width="1"/><line x1="3" y1="8.3" x2="6.5" y2="8.3" stroke="#8a8a8a" stroke-width="0.8"/></svg>
<div class="a" style="left:828px;top:364px;width:52px;height:17px;background:#ffff80;border-top:2px solid #a4a4a4;border-left:2px solid #a4a4a4;border-bottom:1px solid #fff;border-right:1px solid #fff"></div>
<div class="t" style="left:830.6px;transform-origin:0 50%;top:365.38px;font-size:9.3px;color:#9a9a60;transform:scaleX(0.82);">0.016276</div>
<div class="a" style="left:884px;top:363px;width:12.5px;height:19.5px;border-radius:50%;background:radial-gradient(ellipse at 45% 45%,#ffffff 0%,#fafafa 55%,#dcdcdc 100%);border:1px solid #d0d0d0;border-right-color:#6a6a6a;border-bottom-color:#8a8a8a"></div>
<svg class="a" style="left:886px;top:366px" width="9" height="14"><polyline points="2,5.5 4.8,2" fill="none" stroke="#6a6a6a" stroke-width="1"/><line x1="1" y1="7" x2="8" y2="7" stroke="#c0c0c0" stroke-width="0.8"/><polyline points="2,8.5 4.8,12" fill="none" stroke="#6a6a6a" stroke-width="1"/><line x1="3" y1="8.3" x2="6.5" y2="8.3" stroke="#8a8a8a" stroke-width="0.8"/></svg>
<div class="a" style="left:897px;top:364px;width:52px;height:17px;background:#ffff80;border-top:2px solid #a4a4a4;border-left:2px solid #a4a4a4;border-bottom:1px solid #fff;border-right:1px solid #fff"></div>
<div class="t" style="left:899.6px;transform-origin:0 50%;top:365.38px;font-size:9.3px;color:#2a2a2a;transform:scaleX(0.82);">-10</div>
<div class="a" style="left:674.5px;top:384px;width:12.5px;height:19.5px;border-radius:50%;background:radial-gradient(ellipse at 45% 45%,#ffffff 0%,#fafafa 55%,#dcdcdc 100%);border:1px solid #d0d0d0;border-right-color:#6a6a6a;border-bottom-color:#8a8a8a"></div>
<svg class="a" style="left:676.5px;top:387px" width="9" height="14"><polyline points="2,5.5 4.8,2" fill="none" stroke="#6a6a6a" stroke-width="1"/><line x1="1" y1="7" x2="8" y2="7" stroke="#c0c0c0" stroke-width="0.8"/><polyline points="2,8.5 4.8,12" fill="none" stroke="#6a6a6a" stroke-width="1"/><line x1="3" y1="8.3" x2="6.5" y2="8.3" stroke="#8a8a8a" stroke-width="0.8"/></svg>
<div class="a" style="left:687.5px;top:385px;width:53px;height:17px;background:#80ff80;border-top:2px solid #a4a4a4;border-left:2px solid #a4a4a4;border-bottom:1px solid #fff;border-right:1px solid #fff"></div>
<div class="t" style="left:690.1px;transform-origin:0 50%;top:386.38px;font-size:9.3px;color:#2a2a2a;transform:scaleX(0.82);">-7.97858</div>
<div class="a" style="left:743.5px;top:384px;width:12.5px;height:19.5px;border-radius:50%;background:radial-gradient(ellipse at 45% 45%,#ffffff 0%,#fafafa 55%,#dcdcdc 100%);border:1px solid #d0d0d0;border-right-color:#6a6a6a;border-bottom-color:#8a8a8a"></div>
<svg class="a" style="left:745.5px;top:387px" width="9" height="14"><polyline points="2,5.5 4.8,2" fill="none" stroke="#6a6a6a" stroke-width="1"/><line x1="1" y1="7" x2="8" y2="7" stroke="#c0c0c0" stroke-width="0.8"/><polyline points="2,8.5 4.8,12" fill="none" stroke="#6a6a6a" stroke-width="1"/><line x1="3" y1="8.3" x2="6.5" y2="8.3" stroke="#8a8a8a" stroke-width="0.8"/></svg>
<div class="a" style="left:756.5px;top:385px;width:53px;height:17px;background:#80ff80;border-top:2px solid #a4a4a4;border-left:2px solid #a4a4a4;border-bottom:1px solid #fff;border-right:1px solid #fff"></div>
<div class="t" style="left:759.1px;transform-origin:0 50%;top:386.38px;font-size:9.3px;color:#2a2a2a;transform:scaleX(0.82);">-4.24278</div>
<div class="a" style="left:815px;top:384px;width:12.5px;height:19.5px;border-radius:50%;background:radial-gradient(ellipse at 45% 45%,#ffffff 0%,#fafafa 55%,#dcdcdc 100%);border:1px solid #d0d0d0;border-right-color:#6a6a6a;border-bottom-color:#8a8a8a"></div>
<svg class="a" style="left:817px;top:387px" width="9" height="14"><polyline points="2,5.5 4.8,2" fill="none" stroke="#6a6a6a" stroke-width="1"/><line x1="1" y1="7" x2="8" y2="7" stroke="#c0c0c0" stroke-width="0.8"/><polyline points="2,8.5 4.8,12" fill="none" stroke="#6a6a6a" stroke-width="1"/><line x1="3" y1="8.3" x2="6.5" y2="8.3" stroke="#8a8a8a" stroke-width="0.8"/></svg>
<div class="a" style="left:828px;top:385px;width:52px;height:17px;background:#80ff80;border-top:2px solid #a4a4a4;border-left:2px solid #a4a4a4;border-bottom:1px solid #fff;border-right:1px solid #fff"></div>
<div class="t" style="left:830.6px;transform-origin:0 50%;top:386.38px;font-size:9.3px;color:#5a9a5a;transform:scaleX(0.82);">0.016276</div>
<div class="a" style="left:884px;top:384px;width:12.5px;height:19.5px;border-radius:50%;background:radial-gradient(ellipse at 45% 45%,#ffffff 0%,#fafafa 55%,#dcdcdc 100%);border:1px solid #d0d0d0;border-right-color:#6a6a6a;border-bottom-color:#8a8a8a"></div>
<svg class="a" style="left:886px;top:387px" width="9" height="14"><polyline points="2,5.5 4.8,2" fill="none" stroke="#6a6a6a" stroke-width="1"/><line x1="1" y1="7" x2="8" y2="7" stroke="#c0c0c0" stroke-width="0.8"/><polyline points="2,8.5 4.8,12" fill="none" stroke="#6a6a6a" stroke-width="1"/><line x1="3" y1="8.3" x2="6.5" y2="8.3" stroke="#8a8a8a" stroke-width="0.8"/></svg>
<div class="a" style="left:897px;top:385px;width:52px;height:17px;background:#80ff80;border-top:2px solid #a4a4a4;border-left:2px solid #a4a4a4;border-bottom:1px solid #fff;border-right:1px solid #fff"></div>
<div class="t" style="left:899.6px;transform-origin:0 50%;top:386.38px;font-size:9.3px;color:#2a2a2a;transform:scaleX(0.82);">-7</div>
<div class="a" style="left:960px;top:362px;width:36px;height:20px;background:radial-gradient(ellipse 18px 10px at 25% 25%,#ffffff,rgba(255,255,255,0) 100%),linear-gradient(#e6e6e6,#cfcfcf 45%,#8c8c8c);border:1px solid #6a6a6a;border-top-color:#cfcfcf;border-left-color:#c8c8c8;box-shadow:-1px -1px 0 #fbfbfb,1px 1px 0 #fbfbfb"></div>
<div class="t" style="left:917.4px;width:120px;text-align:center;transform-origin:50% 50%;top:366.38px;font-size:9.0px;color:#262626;transform:scaleX(0.84);">Ch1 Off</div>
<div class="a" style="left:960px;top:383px;width:36px;height:20px;background:radial-gradient(ellipse 18px 10px at 25% 25%,#ffffff,rgba(255,255,255,0) 100%),linear-gradient(#e6e6e6,#cfcfcf 45%,#8c8c8c);border:1px solid #6a6a6a;border-top-color:#cfcfcf;border-left-color:#c8c8c8;box-shadow:-1px -1px 0 #fbfbfb,1px 1px 0 #fbfbfb"></div>
<div class="t" style="left:917.4px;width:120px;text-align:center;transform-origin:50% 50%;top:387.28px;font-size:9.0px;color:#262626;transform:scaleX(0.84);">Ch2 Off</div>
<div class="a" style="left:769px;top:406px;width:36px;height:20px;background:radial-gradient(ellipse 18px 10px at 25% 25%,#ffffff,rgba(255,255,255,0) 100%),linear-gradient(#e6e6e6,#cfcfcf 45%,#8c8c8c);border:1px solid #6a6a6a;border-top-color:#cfcfcf;border-left-color:#c8c8c8;box-shadow:-1px -1px 0 #fbfbfb,1px 1px 0 #fbfbfb"></div>
<div class="t" style="left:726.4px;width:120px;text-align:center;transform-origin:50% 50%;top:410.38px;font-size:9.0px;color:#262626;transform:scaleX(0.84);">Apply</div>
<div class="a" style="left:823px;top:406px;width:36px;height:20px;background:radial-gradient(ellipse 18px 10px at 25% 25%,#ffffff,rgba(255,255,255,0) 100%),linear-gradient(#e6e6e6,#cfcfcf 45%,#8c8c8c);border:1px solid #6a6a6a;border-top-color:#cfcfcf;border-left-color:#c8c8c8;box-shadow:-1px -1px 0 #fbfbfb,1px 1px 0 #fbfbfb"></div>
<div class="t" style="left:780.4px;width:120px;text-align:center;transform-origin:50% 50%;top:410.38px;font-size:9.0px;color:#262626;transform:scaleX(0.84);">Reset</div>
<div class="a" style="left:739px;top:444px;width:173px;height:21px;background:radial-gradient(ellipse 40px 5px at 22% 25%,rgba(255,255,255,0.55),rgba(255,255,255,0)),linear-gradient(90deg,#00ffff 0%,#00fbfb 78%,#00a8a8 100%);border:1px solid #f8f8f8;box-shadow:1px 1px 0 #b0b0b0"></div>
<div class="a" style="left:739px;top:444px;width:173px;height:21px;background:linear-gradient(rgba(255,255,255,0.15),rgba(0,0,0,0) 40%,rgba(0,60,60,0.12))"></div>
<div class="t" style="left:765.5px;width:120px;text-align:center;transform-origin:50% 50%;top:448.69px;font-size:8.4px;color:#1a2ab0;transform:scaleX(0.97);">Change to Auto Scaling</div>
<div class="t" style="left:913px;top:519.5px;font-size:15.4px;line-height:20px;height:20px;color:#a8a8a8">Activate Windows</div>
<div class="t" style="left:913px;top:541.5px;font-size:11.2px;color:#a8a8a8">Go to Settings to activate Windows.</div>
</body></html>
